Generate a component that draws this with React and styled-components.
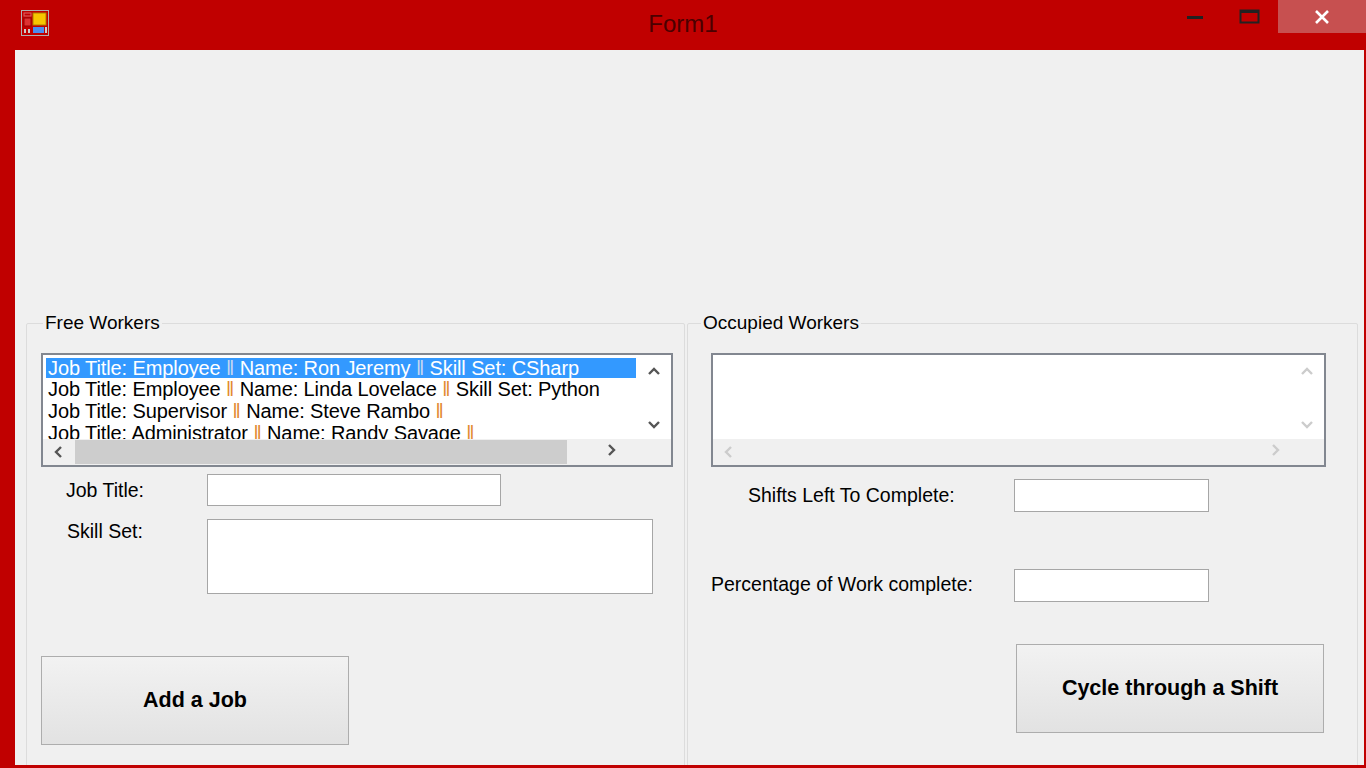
import React from "react";
import styled, { createGlobalStyle } from "styled-components";

const G = createGlobalStyle`
  html,body{margin:0;padding:0;overflow:hidden;}
  body{font-family:"Liberation Sans",Arial,sans-serif;}
`;
const Win = styled.div`
  width:1366px;height:768px;background:#c00000;display:flex;flex-direction:column;box-sizing:border-box;
`;
const TitleBar = styled.div`
  height:50px;display:flex;align-items:center;position:relative;
`;
const Title = styled.div`
  position:absolute;left:0;right:0;top:10px;text-align:center;font-family:"Liberation Sans",sans-serif;font-size:24px;color:#4a0000;
`;
const IconBox = styled.div`margin-left:21px;margin-top:-4px;display:flex;`;
const Controls = styled.div`
  margin-left:auto;display:flex;align-self:flex-start;height:33px;
`;
const Ctl = styled.div`
  width:${p=>p.w}px;height:33px;display:flex;align-items:center;justify-content:center;background:${p=>p.close?"#c75050":"transparent"};
`;
const Client = styled.div`
  flex:1;margin:0 2px 3px 15px;background:#f0f0f0;display:flex;align-items:flex-start;padding:262px 0 0 11px;gap:2px;overflow:hidden;
`;
const Group = styled.fieldset`
  margin:0;width:${p=>p.w}px;height:470px;box-sizing:border-box;border:1px solid #dcdcdc;border-radius:2px;padding:0;
  display:flex;flex-direction:column;padding-left:${p=>p.pl}px;
`;
const Legend = styled.legend`
  font-size:19px;color:#000;padding:0 2px;margin-left:${p=>p.ml}px;
`;
const List = styled.div`
  width:${p=>p.w}px;height:114px;box-sizing:border-box;border:2px solid #828790;background:#fff;margin-top:${p=>p.mt}px;
  display:grid;grid-template-columns:1fr 34px;grid-template-rows:1fr 26px;
`;
const Items = styled.div`overflow:hidden;padding:3px 0 0 3px;font-size:20px;line-height:22px;white-space:nowrap;`;
const Item = styled.div`
  width:588px;padding-left:2px;color:${p=>p.sel?"#fff":"#000"};background:${p=>p.sel?"#3399ff":"transparent"};
  line-height:${p=>p.sel?"20px":"22px"};letter-spacing:-0.1px;
`;
const Sep = styled.span`color:${p=>p.sel?"#c8d8f0":"#e28a30"};`;
const VScroll = styled.div`
  display:flex;flex-direction:column;justify-content:space-between;align-items:center;padding:8px 0 6px;background:#fff;
`;
const HScroll = styled.div`
  grid-column:1 / 3;display:flex;align-items:center;background:#f0f0f0;padding-left:8px;
`;
const Thumb = styled.div`width:492px;height:24px;background:#cdcdcd;margin-left:8px;`;
const Row = styled.div`display:flex;align-items:flex-start;margin-top:${p=>p.mt}px;`;
const Label = styled.div`
  box-sizing:border-box;font-size:19.5px;color:#000;width:${p=>p.w}px;padding-left:${p=>p.pl||0}px;margin-top:${p=>p.mt||0}px;white-space:nowrap;
`;
const Input = styled.div`
  width:${p=>p.w}px;height:${p=>p.h}px;box-sizing:border-box;border:1px solid #a6a6a6;background:#fff;
`;
const Button = styled.div`
  width:308px;height:89px;box-sizing:border-box;border:1px solid #adadad;background:linear-gradient(#f2f2f2,#e2e2e2);
  display:flex;align-items:center;justify-content:center;font-weight:bold;font-size:21.5px;margin-top:${p=>p.mt}px;margin-left:${p=>p.ml||0}px;
`;

const Chev = ({d, c="#555"}) => (
  <svg width="16" height="16" viewBox="0 0 16 16"><path d={d} fill="none" stroke={c} strokeWidth="2.4"/></svg>
);
const UP="M3 11 L8 6 L13 11", DN="M3 5 L8 10 L13 5", LF="M10 3 L5 8 L10 13", RT="M6 3 L11 8 L6 13";

const rows = [
  ["Job Title: Employee ","Name: Ron Jeremy ","Skill Set: CSharp"],
  ["Job Title: Employee ","Name: Linda Lovelace ","Skill Set: Python"],
  ["Job Title: Supervisor ","Name: Steve Rambo ",""],
  ["Job Title: Administrator ","Name: Randy Savage ",""],
];

export default function App(){
  return (<>
    <G/>
    <Win>
      <TitleBar>
        <IconBox>
          <svg width="28" height="26" viewBox="0 0 28 26">
            <rect x="0.5" y="0.5" width="27" height="25" fill="none" stroke="#b0b0b0"/>
            <rect x="3" y="3" width="7" height="3" fill="#c00000" stroke="#d66"/>
            <rect x="3" y="8" width="7" height="8" fill="#d33" stroke="#900"/>
            <rect x="12" y="3" width="13" height="12" fill="#f7c600" stroke="#b08000"/>
            <rect x="12" y="17" width="11" height="6" fill="#4a8cf0"/>
            <rect x="3" y="19" width="2" height="4" fill="#ccc"/><rect x="7" y="19" width="2" height="4" fill="#ccc"/>
            <rect x="24" y="17" width="2" height="6" fill="#ccc"/>
          </svg>
        </IconBox>
        <Title>Form1</Title>
        <Controls>
          <Ctl w={52}><svg width="18" height="6"><rect x="0" y="2" width="16" height="3" fill="#222"/></svg></Ctl>
          <Ctl w={56}><svg width="22" height="16"><rect x="1.5" y="1.5" width="18" height="12" fill="none" stroke="#222" strokeWidth="2"/><rect x="1" y="1" width="19" height="3" fill="#222"/></svg></Ctl>
          <Ctl w={88} close><svg width="16" height="16"><path d="M2 2 L14 14 M14 2 L2 14" stroke="#fff" strokeWidth="2.6"/></svg></Ctl>
        </Controls>
      </TitleBar>
      <Client>
        <Group w={659} pl={14}>
          <Legend ml={2}>Free Workers</Legend>
          <List w={632} mt={19}>
            <Items>
              {rows.map((r,i)=>(
                <Item key={i} sel={i===0}>{r[0]}<Sep sel={i===0}>‖</Sep> {r[1]}<Sep sel={i===0}>‖</Sep>{r[2]?" "+r[2]:""}</Item>
              ))}
            </Items>
            <VScroll><Chev d={UP}/><Chev d={DN}/></VScroll>
            <HScroll><Chev d={LF}/><Thumb/><span style={{marginLeft:36}}><Chev d={RT}/></span></HScroll>
          </List>
          <Row mt={7}>
            <Label w={166} pl={25} mt={5}>Job Title:</Label>
            <Input w={294} h={32}/>
          </Row>
          <Row mt={13}>
            <Label w={166} pl={26} mt={1}>Skill Set:</Label>
            <Input w={446} h={75}/>
          </Row>
          <Button mt={62}>Add a Job</Button>
        </Group>
        <Group w={671} pl={23}>
          <Legend ml={-10}>Occupied Workers</Legend>
          <List w={615} mt={19}>
            <Items/>
            <VScroll><Chev d={UP} c="#ccc"/><Chev d={DN} c="#ccc"/></VScroll>
            <HScroll><Chev d={LF} c="#ccc"/><span style={{marginLeft:530}}><Chev d={RT} c="#ccc"/></span></HScroll>
          </List>
          <Row mt={12}>
            <Label w={303} pl={37} mt={5}>Shifts Left To Complete:</Label>
            <Input w={195} h={33}/>
          </Row>
          <Row mt={57}>
            <Label w={303} mt={4}>Percentage of Work complete:</Label>
            <Input w={195} h={33}/>
          </Row>
          <Button mt={42} ml={305}>Cycle through a Shift</Button>
        </Group>
      </Client>
    </Win>
  </>);
}
